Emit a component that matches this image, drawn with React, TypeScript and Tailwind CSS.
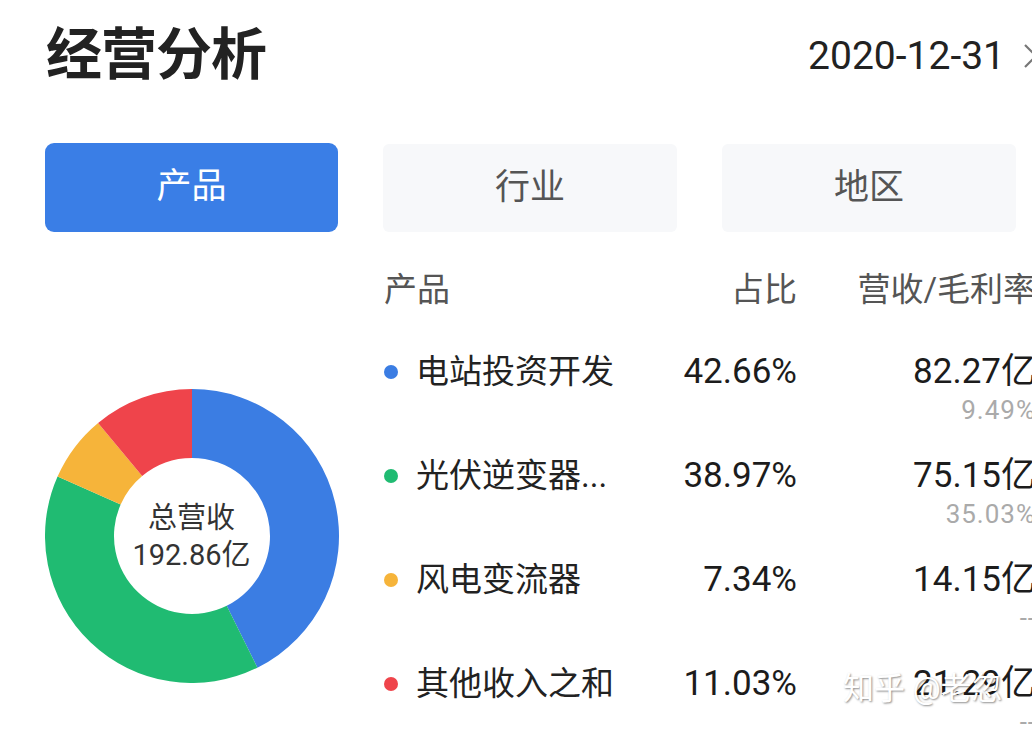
import React from "react";

type Row = {
  name: string;
  color: string;
  share: string;
  revenue: string;
  margin: string;
  value: number;
};

const rows: Row[] = [
  { name: "电站投资开发", color: "#3b7de3", share: "42.66%", revenue: "82.27亿", margin: "9.49%", value: 42.66 },
  { name: "光伏逆变器...", color: "#20bb72", share: "38.97%", revenue: "75.15亿", margin: "35.03%", value: 38.97 },
  { name: "风电变流器", color: "#f6b43a", share: "7.34%", revenue: "14.15亿", margin: "--", value: 7.34 },
  { name: "其他收入之和", color: "#ef444b", share: "11.03%", revenue: "21.29亿", margin: "--", value: 11.03 },
];

const tabs = ["产品", "行业", "地区"];

const font = { fontFamily: "Roboto, 'Noto Sans CJK SC', sans-serif" };

function sector(cx: number, cy: number, r0: number, r1: number, a0: number, a1: number) {
  const p = (r: number, a: number) => [cx + r * Math.cos(a), cy + r * Math.sin(a)];
  const large = a1 - a0 > Math.PI ? 1 : 0;
  const [x0, y0] = p(r1, a0);
  const [x1, y1] = p(r1, a1);
  const [x2, y2] = p(r0, a1);
  const [x3, y3] = p(r0, a0);
  return `M${x0} ${y0} A${r1} ${r1} 0 ${large} 1 ${x1} ${y1} L${x2} ${y2} A${r0} ${r0} 0 ${large} 0 ${x3} ${y3} Z`;
}

const Donut = () => {
  const total = rows.reduce((s, r) => s + r.value, 0);
  let angle = -Math.PI / 2;
  return (
    <div className="relative w-[294px] h-[294px]">
      <svg width="294" height="294" viewBox="0 0 294 294">
        {rows.map((r) => {
          const a0 = angle;
          const a1 = angle + (r.value / total) * Math.PI * 2;
          angle = a1;
          return <path key={r.name} d={sector(147, 147, 78, 147, a0, a1)} fill={r.color} />;
        })}
      </svg>
      <div className="absolute inset-0 flex flex-col items-center justify-center text-[#333] text-[29px] leading-[37px] pt-[2px]">
        <span>总营收</span>
        <span>192.86亿</span>
      </div>
    </div>
  );
};

export default function App() {
  return (
    <div className="w-[1032px] h-[736px] overflow-hidden bg-white relative" style={font}>
      <div className="w-[1040px]">
        <div className="flex justify-between pl-[46px] pt-[26px] h-[110px] items-start">
          <h1 className="text-[56px] leading-[58px] font-bold text-[#222] tracking-[-1px]">经营分析</h1>
          <div className="flex items-center gap-[18px] pt-[6px]">
            <span className="text-[39px] leading-[48px] text-[#222]">2020-12-31</span>
            <svg width="16" height="28" viewBox="0 0 16 28" className="mr-[1px]">
              <path d="M2 3 L13 14 L2 25" fill="none" stroke="#777" strokeWidth="2.2" />
            </svg>
          </div>
        </div>

        <div className="flex gap-[45px] pl-[45px] pt-[33px]">
          {tabs.map((t, i) => (
            <div
              key={t}
              className={
                i === 0
                  ? "w-[293px] h-[89px] rounded-[9px] bg-[#3a7ee6] text-white flex items-center justify-center text-[35px]"
                  : "w-[294px] h-[88px] mt-[1px] rounded-[6px] bg-[#f7f8fa] text-[#555] flex items-center justify-center text-[35px]"
              }
            >
              {t}
            </div>
          ))}
        </div>

        <div className="flex pl-[45px]">
          <div className="w-[293px] flex justify-center pt-[157px]">
            <Donut />
          </div>

          <div className="ml-[46px] pt-[38px] w-[652px]">
            <div className="flex h-[40px] items-center text-[33px] text-[#555]">
              <div className="w-[260px]">产品</div>
              <div className="w-[153px] text-right">占比</div>
              <div className="w-[239px] text-right whitespace-nowrap">营收/毛利率</div>
            </div>

            <div className="pt-[42px]">
              {rows.map((r) => (
                <div key={r.name} className="h-[104px]">
                  <div className="flex h-[40px] items-center">
                    <div className="w-[260px] flex items-center">
                      <span className="w-[14px] h-[14px] rounded-full" style={{ backgroundColor: r.color }} />
                      <span className="ml-[18px] text-[33px] text-[#222]">{r.name}</span>
                    </div>
                    <div className="w-[153px] text-right text-[35px] text-[#1c1c1c]">{r.share}</div>
                    <div className="w-[239px] text-right text-[35px] text-[#1c1c1c]">{r.revenue}</div>
                  </div>
                  <div className="mt-[4px] h-[28px] text-right text-[26px] leading-[28px] text-[#aaa] tracking-[1px]">
                    {r.margin}
                  </div>
                </div>
              ))}
            </div>
          </div>
        </div>
      </div>

      <div className="absolute left-[843px] top-[666px] text-[31px] text-white [text-shadow:1px_1px_2px_rgba(0,0,0,0.45)]">
        知乎 @老忽
      </div>
    </div>
  );
}
